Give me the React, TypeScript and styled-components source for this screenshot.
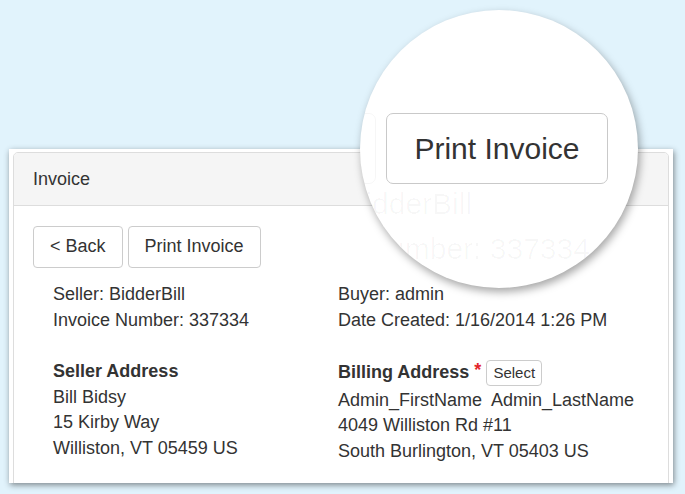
import React from "react";
import styled, { createGlobalStyle } from "styled-components";

const GlobalStyle = createGlobalStyle`
  html, body {
    margin: 0;
    padding: 0;
  }
  body {
    background: #e1f3fc;
    font-family: "Liberation Sans", Arial, sans-serif;
    color: #333;
  }
`;

const Stage = styled.div`
  position: relative;
  width: 685px;
  height: 494px;
  overflow: hidden;
  padding: 149px 0 0 9px;
  box-sizing: border-box;
`;

const Card = styled.div`
  width: 664px;
  height: 334px;
  box-sizing: border-box;
  padding: 3px 4px 0 4px;
  background: #fff;
  box-shadow: 1px 2px 6px rgba(0, 0, 0, 0.45);
  overflow: hidden;
`;

const Panel = styled.div`
  min-height: calc(100% + 10px);
  border: 1px solid #ddd;
  border-radius: 5px 5px 0 0;
`;

const PanelHeading = styled.div`
  height: 52px;
  padding: 0 19px;
  display: flex;
  align-items: center;
  background: #f5f5f5;
  border-bottom: 1px solid #ddd;
  border-radius: 4px 4px 0 0;
  font-size: 18px;
`;

const PanelBody = styled.div`
  padding: 20px 19px 0;
`;

const Toolbar = styled.div`
  display: flex;
  gap: 5px;
`;

const Button = styled.button`
  font-family: inherit;
  font-size: 18px;
  line-height: 25.7px;
  padding: 7.15px 16px;
  color: #333;
  background: #fff;
  border: 1px solid #ccc;
  border-radius: 4px;
`;

const SmallButton = styled(Button)`
  font-size: 15px;
  line-height: 24px;
  padding: 0 6px;
  margin-left: 5px;
`;

const Details = styled.div`
  margin-top: 14px;
  padding-left: 20px;
  display: grid;
  grid-template-columns: 285px 1fr;
  font-size: 18px;
  line-height: 25.7px;
`;

const Column = styled.div`
  display: flex;
  flex-direction: column;
`;

const Line = styled.div`
  white-space: nowrap;
`;

const AddressBlock = styled.div`
  margin-top: 25.7px;
`;

const AddressTitle = styled.div`
  display: flex;
  align-items: center;
  height: 28.5px;
  font-weight: bold;
  white-space: nowrap;
`;

const LeftTitle = styled.div`
  font-weight: bold;
`;

const Required = styled.span`
  color: #e3262b;
  margin-left: 5px;
  position: relative;
  top: -2px;
`;

const Lens = styled.div`
  position: absolute;
  left: 360px;
  top: 10px;
  width: 278px;
  height: 278px;
  border-radius: 50%;
  background: #fff;
  box-shadow: 2px 4px 9px rgba(0, 0, 0, 0.35);
  overflow: hidden;
`;

const LensButton = styled.div`
  position: absolute;
  left: 26px;
  top: 103px;
  width: 222px;
  height: 71px;
  box-sizing: border-box;
  display: flex;
  align-items: center;
  justify-content: center;
  border: 1.5px solid #c9c9c9;
  border-radius: 7px;
  font-size: 30px;
  color: #333;
`;

// faint traces of the magnified page behind the lens
const GhostButton = styled.div`
  position: absolute;
  left: -131px;
  top: 103px;
  width: 147px;
  height: 71px;
  box-sizing: border-box;
  border: 1.5px solid rgba(0, 0, 0, 0.035);
  border-radius: 7px;
`;

const GhostText = styled.div<{ $left: number; $top: number }>`
  position: absolute;
  left: ${(p) => p.$left}px;
  top: ${(p) => p.$top}px;
  font-size: 30px;
  line-height: 43px;
  color: rgba(0, 0, 0, 0.03);
  white-space: nowrap;
`;

const App: React.FunctionComponent = () => {
  return (
    <Stage>
      <GlobalStyle />
      <Card>
        <Panel>
          <PanelHeading>Invoice</PanelHeading>
          <PanelBody>
            <Toolbar>
              <Button>&lt; Back</Button>
              <Button>Print Invoice</Button>
            </Toolbar>
            <Details>
              <Column>
                <Line>Seller: BidderBill</Line>
                <Line>Invoice Number: 337334</Line>
                <AddressBlock>
                  <LeftTitle>Seller Address</LeftTitle>
                  <Line>Bill Bidsy</Line>
                  <Line>15 Kirby Way</Line>
                  <Line>Williston, VT 05459 US</Line>
                </AddressBlock>
              </Column>
              <Column>
                <Line>Buyer: admin</Line>
                <Line>Date Created: 1/16/2014 1:26 PM</Line>
                <AddressBlock>
                  <AddressTitle>
                    Billing Address
                    <Required>*</Required>
                    <SmallButton>Select</SmallButton>
                  </AddressTitle>
                  <Line>Admin_FirstName&nbsp; Admin_LastName</Line>
                  <Line>4049 Williston Rd #11</Line>
                  <Line>South Burlington, VT 05403 US</Line>
                </AddressBlock>
              </Column>
            </Details>
          </PanelBody>
        </Panel>
      </Card>
      <Lens>
        <GhostButton />
        <GhostText $left={-108} $top={172}>
          Seller: BidderBill
        </GhostText>
        <GhostText $left={-97} $top={217}>
          Invoice Number: 337334
        </GhostText>
        <LensButton>Print Invoice</LensButton>
      </Lens>
    </Stage>
  );
};

export default App;
